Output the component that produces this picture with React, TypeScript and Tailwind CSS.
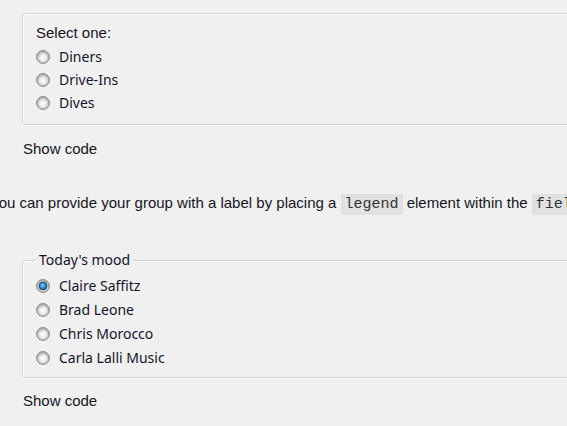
const Radio = ({ checked = false }: { checked?: boolean }) => (
  <svg width="14" height="14" viewBox="0 0 14 14" className="shrink-0">
    <defs>
      <radialGradient id="rbg" cx="50%" cy="55%" r="55%">
        <stop offset="0%" stopColor="#ffffff" />
        <stop offset="45%" stopColor="#ececec" />
        <stop offset="100%" stopColor="#9f9f9f" />
      </radialGradient>
      <radialGradient id="rdot" cx="45%" cy="40%" r="65%">
        <stop offset="0%" stopColor="#8fd3f5" />
        <stop offset="50%" stopColor="#2a8fcc" />
        <stop offset="100%" stopColor="#155a8c" />
      </radialGradient>
    </defs>
    <circle cx="7" cy="7" r="6.4" fill="url(#rbg)" stroke="#878787" strokeWidth="1" />
    {checked && (
      <circle cx="7" cy="7" r="3.9" fill="url(#rdot)" stroke="#1a4a72" strokeWidth="0.9" />
    )}
  </svg>
);

const Option = ({ label, checked }: { label: string; checked?: boolean }) => (
  <label className="flex items-center gap-[9px] h-[23px] text-[14px] text-[#14142a] [font-family:'Noto_Sans',sans-serif]">
    <Radio checked={checked} />
    <span className="leading-none">{label}</span>
  </label>
);

const MoodOption = ({ label, checked }: { label: string; checked?: boolean }) => (
  <label className="flex items-center gap-[9px] h-[24px] text-[14px] text-[#14142a] [font-family:'Noto_Sans',sans-serif]">
    <Radio checked={checked} />
    <span className="leading-none">{label}</span>
  </label>
);

const Code = ({ children }: { children: string }) => (
  <code className="bg-[#e1e1e1] text-[#333] px-[4px] py-[2px] text-[15px] leading-[18px] [font-family:'Liberation_Mono',monospace]">
    {children}
  </code>
);

const App = () => {
  return (
    <div className="w-[567px] h-[426px] overflow-hidden bg-[#f0f0f0] text-[#16161e] [font-family:'Liberation_Sans',Arial,sans-serif]">
      <div className="pl-[22px] pt-[13px]">
        <div className="w-[620px] border border-[#cdd4d4] rounded-[3px] shadow-[inset_1px_1px_0_#fff,0_1px_0_#fff] pl-[13px] pt-[8px] pb-[10px]">
          <div className="h-[23px] flex items-center text-[15px]">Select one:</div>
          <Option label="Diners" />
          <Option label="Drive-Ins" />
          <Option label="Dives" />
        </div>
        <div className="mt-[14px] h-[20px] leading-[20px] text-[15px] pl-[1px]">Show code</div>
      </div>

      <p className="mt-[33px] ml-[-10px] h-[22px] leading-[22px] text-[15px] whitespace-nowrap">
        You can provide your group with a label by placing a <Code>legend</Code> element within the{" "}
        <Code>fieldset</Code> element.
      </p>

      <div className="pl-[22px] mt-[37px]">
        <fieldset className="w-[620px] border border-[#cdd4d4] rounded-[3px] shadow-[inset_1px_1px_0_#fff,0_1px_0_#fff] pl-[13px] pt-[5px] pb-[7px]">
          <legend className="px-[3px] text-[14px] leading-[18px] bg-[#f0f0f0] text-[#14142a] [font-family:'Noto_Sans',sans-serif]">
            Today's mood
          </legend>
          <MoodOption label="Claire Saffitz" checked />
          <MoodOption label="Brad Leone" />
          <MoodOption label="Chris Morocco" />
          <MoodOption label="Carla Lalli Music" />
        </fieldset>
        <div className="mt-[13px] h-[20px] leading-[20px] text-[15px] pl-[1px]">Show code</div>
      </div>
    </div>
  );
};

export default App;
